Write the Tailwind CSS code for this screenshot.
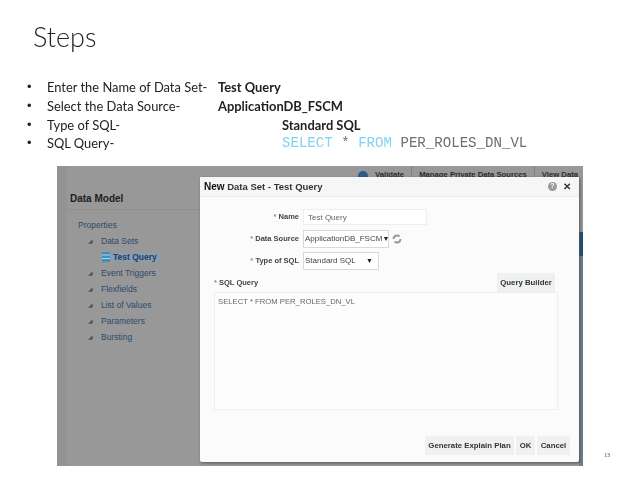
<!DOCTYPE html>
<html>
<head>
<meta charset="utf-8">
<script src="https://cdn.jsdelivr.net/npm/@tailwindcss/browser@4"></script>
</head>
<body class="bg-white">
<div class="relative w-[638px] h-[478px] overflow-hidden bg-white font-['Lato',sans-serif] text-[#222]">
  <h1 class="pt-[17px] pl-[33px] h-[78px] text-[27px] leading-[40px] font-light text-[#222] blur-[0.3px]">Steps</h1>
  <ul class="flex flex-col pl-[27px] text-[12.9px] leading-[18.8px] h-[88px] blur-[0.3px]">
    <li class="flex"><span class="w-[20px] font-['Liberation_Sans',sans-serif]">•</span><span class="w-[171px]">Enter the Name of Data Set-</span><b>Test Query</b></li>
    <li class="flex"><span class="w-[20px] font-['Liberation_Sans',sans-serif]">•</span><span class="w-[171px]">Select the Data Source-</span><b>ApplicationDB_FSCM</b></li>
    <li class="flex"><span class="w-[20px] font-['Liberation_Sans',sans-serif]">•</span><span class="w-[235px]">Type of SQL-</span><b>Standard SQL</b></li>
    <li class="flex"><span class="w-[20px] font-['Liberation_Sans',sans-serif]">•</span><span class="w-[235px]">SQL Query-</span><span class="font-['Liberation_Mono',monospace] text-[14.1px] text-[#6e6e6e]"><span class="text-[#7fd3f2]">SELECT</span> * <span class="text-[#7fd3f2]">FROM</span> PER_ROLES_DN_VL</span></li>
  </ul>
  <div class="relative ml-[57px] w-[526px] h-[300px] border-l-[10px] border-[#939393] bg-[#989898] font-['Liberation_Sans',sans-serif] blur-[0.4px]">
    <div class="flex h-[11px] items-start justify-end gap-[7px] pr-[5px] text-[7.7px] leading-[17px] font-bold text-[#2b2b2b]">
      <span class="flex items-center gap-[7px]"><span class="w-[10px] h-[10px] mt-[3px] rounded-full bg-[#2d5a85]"></span>Validate</span>
      <span class="w-px h-[11px] bg-[#808080]"></span>
      <span>Manage Private Data Sources</span>
      <span class="w-px h-[11px] bg-[#808080]"></span>
      <span>View Data</span>
    </div>
    <div class="ml-[1px] mt-[11px] w-[132px] h-[22px] border-b border-[#8f8f8f] pl-[2px] text-[10px] leading-[22px] font-bold text-[#1e1e1e]">Data Model</div>
    <ul class="ml-[11px] mt-[7px] flex flex-col text-[8.5px] leading-[16px] text-[#2c4a6b]">
      <li class="h-[16px]">Properties</li>
      <li class="flex items-center h-[16px] pl-[10px]"><span class="w-[13px] text-[6px] text-[#555]">◢</span>Data Sets</li>
      <li class="flex items-center h-[16px] pl-[24px]">
        <svg class="w-[8px] h-[10px] mr-[1px]" viewBox="0 0 8 10"><rect width="8" height="10" fill="#3c8fc0"/><path d="M0 3h8M0 6.5h8" stroke="#b7d4e6" stroke-width="1"/></svg>
        <span class="bg-[#8a9cb0] px-[2px] leading-[9px] font-bold text-[#1d3f66]">Test Query</span>
      </li>
      <li class="flex items-center h-[16px] pl-[10px]"><span class="w-[13px] text-[6px] text-[#555]">◢</span>Event Triggers</li>
      <li class="flex items-center h-[16px] pl-[10px]"><span class="w-[13px] text-[6px] text-[#555]">◢</span>Flexfields</li>
      <li class="flex items-center h-[16px] pl-[10px]"><span class="w-[13px] text-[6px] text-[#555]">◢</span>List of Values</li>
      <li class="flex items-center h-[16px] pl-[10px]"><span class="w-[13px] text-[6px] text-[#555]">◢</span>Parameters</li>
      <li class="flex items-center h-[16px] pl-[10px]"><span class="w-[13px] text-[6px] text-[#555]">◢</span>Bursting</li>
    </ul>
    <div class="absolute right-0 top-[66px] w-[4px] h-[24px] bg-[#1c4a74]"></div>
    <div class="absolute right-0 top-[90px] w-[4px] h-[210px] bg-[#6d7f92]"></div>
    <div class="absolute left-[133px] top-[11px] w-[379px] h-[285px] flex flex-col bg-[#fbfbfb] rounded-[2px] shadow-[1px_1px_3px_#555] text-[#222]">
      <div class="flex items-center justify-between h-[20px] px-[4px] border-b border-[#ececec] bg-[#f6f6f6]">
        <span class="text-[9.5px] font-bold text-[#333]"><span class="text-[10px] text-[#111]">New</span> Data Set - Test Query</span>
        <span class="flex items-center gap-[6px] pr-[4px]">
          <span class="flex items-center justify-center w-[9px] h-[9px] rounded-full bg-[#9a9a9a] text-[7px] font-bold text-white">?</span>
          <span class="text-[10px] font-bold text-[#333] leading-none">✕</span>
        </span>
      </div>
      <div class="grid grid-cols-[99px_auto] gap-x-[4px] items-center justify-start mt-[12px] text-[7.5px] font-bold text-[#444]">
        <span class="text-right"><span class="text-[#4a9ccf]">* </span>Name</span>
        <span class="w-[124px] h-[16px] pl-[4px] border border-[#eeeeee] bg-white text-[8px] leading-[15px] font-normal text-[#666]">Test Query</span>
        <span class="text-right mt-[5px]"><span class="text-[#4a9ccf]">* </span>Data Source</span>
        <span class="flex items-center mt-[5px]">
          <span class="flex items-center justify-between w-[86px] h-[18px] px-[1px] border border-[#d9d9d9] bg-white text-[8px] font-normal text-[#444]">ApplicationDB_FSCM<span class="text-[7px] text-[#222]">▼</span></span>
          <svg class="w-[10px] h-[10px] ml-[3px]" viewBox="0 0 10 10" fill="none" stroke="#9a9a9a" stroke-width="2"><path d="M1.5 5a3.5 3.5 0 0 1 6-2.5M8.5 5a3.5 3.5 0 0 1-6 2.5"/></svg>
        </span>
        <span class="text-right mt-[4px]"><span class="text-[#4a9ccf]">* </span>Type of SQL</span>
        <span class="flex items-center justify-between w-[76px] h-[18px] mt-[4px] pl-[1px] pr-[5px] border border-[#d9d9d9] bg-white text-[8px] font-normal text-[#444]">Standard SQL<span class="text-[7px] text-[#222]">▼</span></span>
      </div>
      <div class="flex items-end justify-between mt-[3px] pl-[14px] pr-[24px]">
        <span class="pb-[4px] text-[7.5px] font-bold text-[#444]"><span class="text-[#4a9ccf]">* </span>SQL Query</span>
        <span class="flex items-center justify-center w-[58px] h-[19px] bg-[#eff0f1] text-[7.8px] font-bold text-[#333]">Query Builder</span>
      </div>
      <div class="ml-[14px] w-[344px] h-[118px] px-[3px] py-[3px] border border-[#eeeeee] bg-[#fdfdfe] text-[7.7px] leading-[12px] text-[#666]">SELECT *  FROM PER_ROLES_DN_VL</div>
      <div class="flex justify-end gap-[2px] mt-[26px] pr-[9px] text-[7.8px] font-bold text-[#333]">
        <span class="flex items-center justify-center w-[89px] h-[19px] bg-[#eff0f1]">Generate Explain Plan</span>
        <span class="flex items-center justify-center w-[19px] h-[19px] bg-[#eff0f1]">OK</span>
        <span class="flex items-center justify-center w-[33px] h-[19px] bg-[#eff0f1]">Cancel</span>
      </div>
    </div>
  </div>
  <span class="absolute left-[604px] top-[451px] font-['Liberation_Serif',serif] text-[6px] leading-[8px] text-[#444]">13</span>
</div>
</body>
</html>
